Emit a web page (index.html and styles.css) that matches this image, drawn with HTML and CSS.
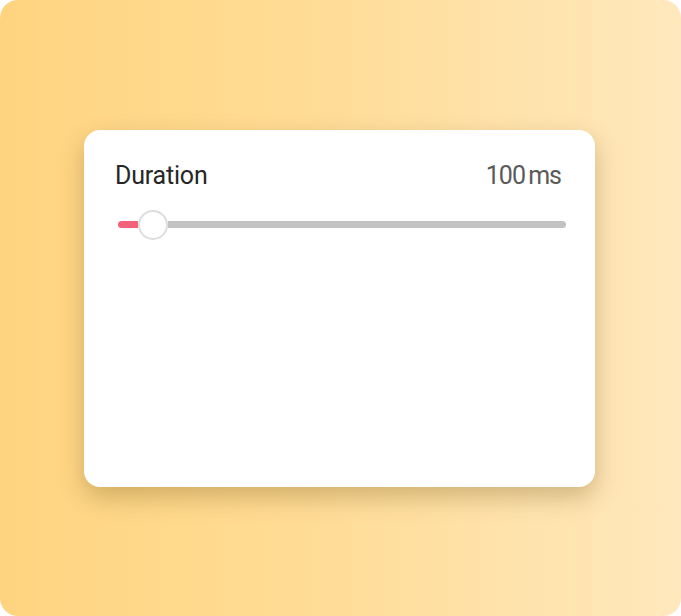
FILE: index.html
```html
<!DOCTYPE html>
<html lang="en">
<head>
<meta charset="utf-8">
<title>Duration slider</title>
<link rel="stylesheet" href="styles.css">
</head>
<body>
<div class="stage">
  <div class="card">
    <div class="header">
      <span class="label">Duration</span>
      <span class="value">100 ms</span>
    </div>
    <div class="slider">
      <div class="fill"></div>
      <div class="thumb"></div>
      <div class="rest"></div>
    </div>
  </div>
</div>
</body>
</html>
```
FILE: styles.css
```css
html, body {
  margin: 0;
  padding: 0;
  background: #ffffff;
}
.stage {
  width: 681px;
  height: 616px;
  box-sizing: border-box;
  padding-right: 2px;
  border-radius: 18px;
  background: linear-gradient(90deg, #ffd480 0%, #ffdc95 45%, #ffe8bd 100%);
  display: flex;
  align-items: center;
  justify-content: center;
  font-family: Roboto, "Liberation Sans", sans-serif;
}
.card {
  width: 511px;
  height: 357px;
  box-sizing: border-box;
  background: #ffffff;
  border-radius: 16px;
  box-shadow: 0 10px 24px rgba(90, 60, 0, 0.28);
  padding: 31px 29px 0 31px;
  display: flex;
  flex-direction: column;
  gap: 19px;
}
.header {
  display: flex;
  justify-content: space-between;
  align-items: baseline;
  padding-right: 5px;
  font-size: 25px;
  line-height: 30px;
}
.label {
  color: #262626;
  letter-spacing: -0.2px;
}
.value {
  color: #5a5a5a;
  word-spacing: -2px;
  letter-spacing: -1px;
}
.slider {
  display: flex;
  align-items: center;
  height: 30px;
  margin-left: 3px;
}
.fill {
  width: 20px;
  height: 7px;
  background: #f2637a;
  border-radius: 4px 0 0 4px;
}
.thumb {
  width: 30px;
  height: 30px;
  box-sizing: border-box;
  border-radius: 50%;
  border: 2px solid #dddddd;
  background: #ffffff;
}
.rest {
  flex: 1;
  height: 7px;
  background: #c2c2c2;
  border-radius: 0 4px 4px 0;
}
```
